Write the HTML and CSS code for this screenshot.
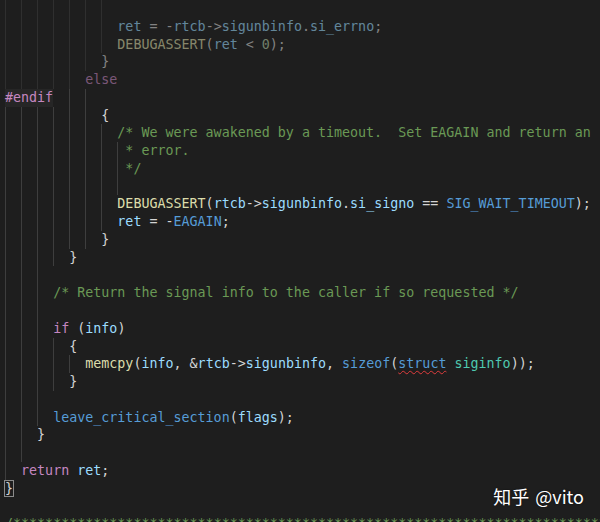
FILE: index.html
```html
<!DOCTYPE html>
<html>
<head>
<meta charset="utf-8">
<link rel="stylesheet" href="styles.css">
</head>
<body>
<div class="editor">
  <div class="line dim"><span class="g"></span><span class="g"></span><span class="g"></span><span class="g"></span><span class="g"></span><span class="g"></span><span class="g"></span></div>
  <div class="line dim"><span class="g"></span><span class="g"></span><span class="g"></span><span class="g"></span><span class="g"></span><span class="g"></span><span class="g"></span><span><span class="v">ret</span> = -<span class="v">rtcb</span>-&gt;<span class="v">sigunbinfo</span>.<span class="v">si_errno</span>;</span></div>
  <div class="line dim"><span class="g"></span><span class="g"></span><span class="g"></span><span class="g"></span><span class="g"></span><span class="g"></span><span class="g"></span><span><span class="f">DEBUGASSERT</span>(<span class="v">ret</span> &lt; <span class="n">0</span>);</span></div>
  <div class="line dim"><span class="g"></span><span class="g"></span><span class="g"></span><span class="g"></span><span class="g"></span><span class="g"></span><span>}</span></div>
  <div class="line dim"><span class="g"></span><span class="g"></span><span class="g"></span><span class="g"></span><span class="g"></span><span class="k">else</span></div>
  <div class="line"><span class="pp k">#endif</span><span class="s"></span><span class="g"></span><span class="g"></span></div>
  <div class="line"><span class="g"></span><span class="g"></span><span class="g"></span><span class="g"></span><span class="g"></span><span class="g"></span><span>{</span></div>
  <div class="line"><span class="g"></span><span class="g"></span><span class="g"></span><span class="g"></span><span class="g"></span><span class="g"></span><span class="g"></span><span class="c">/* We were awakened by a timeout.  Set EAGAIN and return an</span></div>
  <div class="line"><span class="g"></span><span class="g"></span><span class="g"></span><span class="g"></span><span class="g"></span><span class="g"></span><span class="g"></span><span class="gl c"> * error.</span></div>
  <div class="line"><span class="g"></span><span class="g"></span><span class="g"></span><span class="g"></span><span class="g"></span><span class="g"></span><span class="g"></span><span class="gl c"> */</span></div>
  <div class="line"><span class="g"></span><span class="g"></span><span class="g"></span><span class="g"></span><span class="g"></span><span class="g"></span><span class="g"></span><span class="g"></span></div>
  <div class="line"><span class="g"></span><span class="g"></span><span class="g"></span><span class="g"></span><span class="g"></span><span class="g"></span><span class="g"></span><span><span class="f">DEBUGASSERT</span>(<span class="v">rtcb</span>-&gt;<span class="v">sigunbinfo</span>.<span class="v">si_signo</span> == <span class="m">SIG_WAIT_TIMEOUT</span>);</span></div>
  <div class="line"><span class="g"></span><span class="g"></span><span class="g"></span><span class="g"></span><span class="g"></span><span class="g"></span><span class="g"></span><span><span class="v">ret</span> = -<span class="m">EAGAIN</span>;</span></div>
  <div class="line"><span class="g"></span><span class="g"></span><span class="g"></span><span class="g"></span><span class="g"></span><span class="g"></span><span>}</span></div>
  <div class="line"><span class="g"></span><span class="g"></span><span class="g"></span><span class="g"></span><span>}</span></div>
  <div class="line"><span class="g"></span><span class="g"></span><span class="g"></span></div>
  <div class="line"><span class="g"></span><span class="g"></span><span class="g"></span><span class="c">/* Return the signal info to the caller if so requested */</span></div>
  <div class="line"><span class="g"></span><span class="g"></span><span class="g"></span></div>
  <div class="line"><span class="g"></span><span class="g"></span><span class="g"></span><span><span class="k">if</span> (<span class="v">info</span>)</span></div>
  <div class="line"><span class="g"></span><span class="g"></span><span class="g"></span><span class="g"></span><span>{</span></div>
  <div class="line"><span class="g"></span><span class="g"></span><span class="g"></span><span class="g"></span><span class="g"></span><span><span class="f">memcpy</span>(<span class="v">info</span>, &amp;<span class="v">rtcb</span>-&gt;<span class="v">sigunbinfo</span>, <span class="m">sizeof</span>(<span class="m squig">struct</span> <span class="t">siginfo</span>));</span></div>
  <div class="line"><span class="g"></span><span class="g"></span><span class="g"></span><span class="g"></span><span>}</span></div>
  <div class="line"><span class="g"></span><span class="g"></span><span class="g"></span></div>
  <div class="line"><span class="g"></span><span class="g"></span><span class="g"></span><span><span class="m">leave_critical_section</span>(<span class="v">flags</span>);</span></div>
  <div class="line"><span class="g"></span><span class="g"></span><span>}</span></div>
  <div class="line"><span class="g"></span><span class="g"></span></div>
  <div class="line"><span class="g"></span><span><span class="k">return</span> <span class="v">ret</span>;</span></div>
  <div class="line"><span class="match">}</span></div>
  <div class="line"></div>
  <div class="line"><span class="c">/*****************************************************************************</span></div>
</div>
<div class="wm">知乎 @vito</div>
</body>
</html>
```

FILE: styles.css
```css
html, body {
  margin: 0;
  padding: 0;
  background: #1e1e1e;
  height: 100%;
  overflow: hidden;
}

body {
  position: relative;
}

.editor {
  padding-left: 5px;
  margin-top: 0;
  font-family: "DejaVu Sans Mono", monospace;
  font-size: 13.33px;
  color: #d4d4d4;
}

.line {
  display: flex;
  height: 17.77px;
  line-height: 17.77px;
  white-space: pre;
}

.g, .s {
  flex: none;
  width: 16.06px;
}

.g {
  box-shadow: inset 1px 0 0 #3e3e3e;
}

.gl {
  box-shadow: inset 1px 0 0 #3e3e3e;
}

.dim {
  opacity: 0.55;
}

.pp {
  background: #262626;
}

.v { color: #9cdcfe; }
.f { color: #dcdcaa; }
.k { color: #c586c0; }
.m { color: #569cd6; }
.t { color: #4ec9b0; }
.c { color: #6a9955; }
.n { color: #b5cea8; }

.squig {
  text-decoration: underline wavy #e03c3c;
  text-decoration-thickness: 1px;
  text-underline-offset: 2px;
}

.match {
  box-shadow: inset 0 0 0 1px #8a8a8a;
  margin-left: -1px;
  padding: 0 1px;
}

.wm {
  position: absolute;
  right: 16px;
  top: 483px;
  font-family: "Noto Sans CJK SC", "Noto Sans", sans-serif;
  font-size: 18px;
  color: #ffffff;
  word-spacing: 2px;
  text-shadow: 0 0 2px rgba(0,0,0,0.6);
}
```
